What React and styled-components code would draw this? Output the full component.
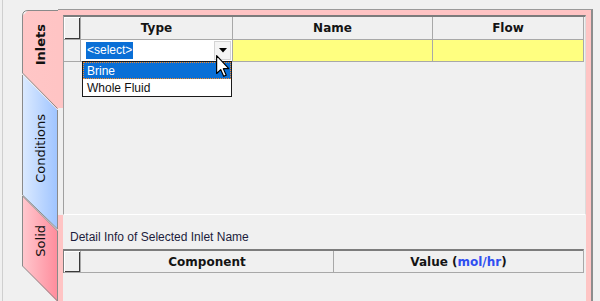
import React from "react";
import styled, { createGlobalStyle } from "styled-components";

const Global = createGlobalStyle`
  html, body {
    margin: 0;
    padding: 0;
    background: #f0f0f0;
    overflow: hidden;
  }
  body {
    font-family: "Liberation Sans", Arial, sans-serif;
    font-size: 12px;
    color: #101010;
  }
`;

const Root = styled.div`
  display: flex;
  align-items: flex-start;
  height: 301px;
  box-sizing: border-box;
  margin-left: 2px;
  border-left: 1px solid #cfcfcf;
  padding: 9px 0 0 19px;
`;

const TabStrip = styled.div`
  display: flex;
  flex-direction: column;
  width: 36px;
  padding-top: 1px;
`;

const Tab = styled.div`
  position: relative;
  z-index: ${(p) => p.$z};
  height: ${(p) => p.$h}px;
  margin-top: ${(p) => p.$mt}px;
  display: flex;
  align-items: center;
  justify-content: center;
  padding-bottom: ${(p) => p.$pb}px;
  padding-left: ${(p) => p.$pl || 0}px;
  box-sizing: border-box;
  flex-shrink: 0;
`;

const TabShape = styled.svg`
  position: absolute;
  left: 0;
  top: 0;
  overflow: visible;
`;

const TabLabel = styled.span`
  position: relative;
  writing-mode: vertical-rl;
  transform: rotate(180deg);
  font-family: "DejaVu Sans", Verdana, sans-serif;
  font-size: 13px;
  font-weight: ${(p) => (p.$active ? 700 : 400)};
  color: #111;
  white-space: nowrap;
`;

const Frame = styled.div`
  width: 535px;
  height: 292px;
  box-sizing: border-box;
  border-top: 1px solid #9a9a9a;
  border-right: 2px solid #8c8c8c;
  padding: 5px 5px 0 5px;
  background:
    linear-gradient(to bottom, transparent 0 98px, #f0f0f0 98px 205px, transparent 205px) left top / 5px 100% no-repeat,
    #ffc4c4;
  display: flex;
  flex-direction: column;
`;

const Content = styled.div`
  flex: 1;
  background: #f0f0f0;
  display: flex;
  flex-direction: column;
`;

const UpperPane = styled.div`
  height: 200px;
  box-sizing: border-box;
  border-top: 2px solid #7c7c7c;
  border-left: 1px solid #a0a0a0;
  border-right: 1px solid #dcdcdc;
  border-bottom: 1px solid #ffffff;
`;

const Grid = styled.div`
  display: grid;
  grid-template-columns: ${(p) => p.$cols};
  width: 520px;
`;

const HeadCell = styled.div`
  height: ${(p) => p.$h || 23}px;
  box-sizing: border-box;
  border-right: 1px solid #a8a8a8;
  border-bottom: 1px solid #a8a8a8;
  display: flex;
  align-items: center;
  justify-content: center;
  font-family: "DejaVu Sans", Verdana, sans-serif;
  font-weight: 700;
  font-size: 12px;
  color: #141414;
  white-space: nowrap;
`;

const Corner = styled.div`
  height: ${(p) => p.$h || 23}px;
  box-sizing: border-box;
  border-right: 1px solid #a8a8a8;
  border-bottom: 1px solid #a8a8a8;
  box-shadow: inset 1px 1px 0 #ffffff, inset -1px -1px 0 #3a3a3a;
`;

const RowHead = styled.div`
  height: 22px;
  box-sizing: border-box;
  border-right: 1px solid #a8a8a8;
  border-bottom: 1px solid #a8a8a8;
`;

const Cell = styled.div`
  position: relative;
  height: 22px;
  box-sizing: border-box;
  border-right: 1px solid #a8a8a8;
  border-bottom: 1px solid #a8a8a8;
  background: ${(p) => p.$bg || "#f0f0f0"};
`;

const SelectBox = styled.div`
  height: 100%;
  background: #ffffff;
  display: flex;
  align-items: center;
  padding-left: 5px;
  box-sizing: border-box;
`;

const Highlight = styled.span`
  background: #0a6fd6;
  color: #ffffff;
  padding: 1px 1px 2px;
  line-height: 14px;
`;

const DropButton = styled.div`
  position: absolute;
  right: 1px;
  top: 1px;
  width: 17px;
  height: 19px;
  box-sizing: border-box;
  background: #f4f4f4;
  border: 1px solid #d4d4d4;
  display: flex;
  align-items: center;
  justify-content: center;
`;

const DropList = styled.div`
  position: absolute;
  left: 1px;
  top: 21px;
  width: 150px;
  z-index: 5;
  background: #ffffff;
  border: 1px solid #1a1a1a;
  box-sizing: border-box;
`;

const DropItem = styled.div`
  height: 17px;
  box-sizing: border-box;
  padding-left: 3px;
  display: flex;
  align-items: center;
  font-size: 12px;
  color: ${(p) => (p.$selected ? "#ffffff" : "#111")};
  background: ${(p) => (p.$selected ? "#0a6fd6" : "#ffffff")};
  border: 1px dotted ${(p) => (p.$selected ? "#ff8a20" : "transparent")};
`;

const Cursor = styled.svg`
  position: absolute;
  left: 135px;
  top: 15px;
  z-index: 6;
`;

const LabelArea = styled.div`
  height: 34px;
  box-sizing: border-box;
  display: flex;
  align-items: flex-end;
  padding: 0 0 5px 7px;
  color: #1c1c3c;
  font-size: 12px;
`;

const LowerGrid = styled.div`
  border-top: 2px solid #7c7c7c;
  border-left: 1px solid #7c7c7c;
  border-right: 1px solid #b8b8b8;
  width: 521px;
  box-sizing: border-box;
`;

const Unit = styled.span`
  color: #2f4ff0;
`;

const tabs = [
  {
    key: "inlets",
    label: "Inlets",
    active: true,
    h: 99,
    mt: 0,
    pb: 29,
    z: 3,
    fill: "url(#gInlets)",
    poly: "0.5,6 6,0.5 36,0.5 36,99 35,99 0.5,63",
    line: "M36,0.5 L6,0.5 Q0.5,0.5 0.5,6 L0.5,63 L35.5,98.5",
  },
  {
    key: "conditions",
    label: "Conditions",
    h: 154,
    mt: -34,
    pb: 8,
    z: 2,
    fill: "url(#gCond)",
    poly: "0.5,0 35.5,35 35.5,154 0.5,120",
    line: "M0.5,0 L0.5,120 L35.5,154 L35.5,35",
  },
  {
    key: "solid",
    label: "Solid",
    h: 106,
    mt: -33,
    pb: 16,
    pl: 0,
    z: 1,
    fill: "url(#gSolid)",
    poly: "0.5,0 35.5,35 35.5,106 0.5,70",
    line: "M0.5,0 L35.5,35 L35.5,106 M0.5,0 L0.5,70 L35.5,105",
  },
];

function SideTabs() {
  return (
    <TabStrip>
      {tabs.map((t) => (
        <Tab key={t.key} $h={t.h} $mt={t.mt} $pb={t.pb} $pl={t.pl} $z={t.z}>
          <TabShape width="36" height={t.h}>
            <defs>
              <linearGradient id="gInlets" x1="0" x2="1" y1="0" y2="0">
                <stop offset="0" stopColor="#ffc6c6" />
                <stop offset="1" stopColor="#ffc4c4" />
              </linearGradient>
              <linearGradient id="gCond" x1="0" x2="1" y1="0" y2="0">
                <stop offset="0" stopColor="#dbeaff" />
                <stop offset="1" stopColor="#9fc4ff" />
              </linearGradient>
              <linearGradient id="gSolid" x1="0" x2="1" y1="0" y2="0">
                <stop offset="0" stopColor="#ffc8ce" />
                <stop offset="1" stopColor="#ff8c9c" />
              </linearGradient>
            </defs>
            <polygon points={t.poly} fill={t.fill} />
            <path d={t.line} fill="none" stroke="#8a8a8a" strokeWidth="1" />
          </TabShape>
          <TabLabel $active={t.active}>{t.label}</TabLabel>
        </Tab>
      ))}
    </TabStrip>
  );
}

export default function App() {
  return (
    <>
      <Global />
      <Root>
        <SideTabs />
        <Frame>
          <Content>
            <UpperPane>
              <Grid $cols="17px 152px 200px 151px">
                <Corner />
                <HeadCell>Type</HeadCell>
                <HeadCell>Name</HeadCell>
                <HeadCell>Flow</HeadCell>

                <RowHead />
                <Cell $bg="#ffffff">
                  <SelectBox>
                    <Highlight>&lt;select&gt;</Highlight>
                  </SelectBox>
                  <DropButton>
                    <svg width="8" height="5" viewBox="0 0 8 5">
                      <polygon points="0,0 8,0 4,4.5" fill="#000" />
                    </svg>
                  </DropButton>
                  <DropList>
                    <DropItem $selected>Brine</DropItem>
                    <DropItem>Whole Fluid</DropItem>
                  </DropList>
                  <Cursor width="14" height="22" viewBox="0 0 12 19">
                    <path
                      d="M0.5,0.5 L0.5,16 L4,12.6 L6.6,18.4 L8.8,17.4 L6.3,11.8 L11,11.8 Z"
                      fill="#ffffff"
                      stroke="#000"
                      strokeWidth="1"
                      strokeLinejoin="round"
                    />
                  </Cursor>
                </Cell>
                <Cell $bg="#ffff80" />
                <Cell $bg="#ffff80" />
              </Grid>
            </UpperPane>

            <LabelArea>Detail Info of Selected Inlet Name</LabelArea>

            <LowerGrid>
              <Grid $cols="17px 253px 250px">
                <Corner $h={22} />
                <HeadCell $h={22}>Component</HeadCell>
                <HeadCell $h={22}>
                  Value&nbsp;(<Unit>mol/hr</Unit>)
                </HeadCell>
              </Grid>
            </LowerGrid>
          </Content>
        </Frame>
      </Root>
    </>
  );
}
